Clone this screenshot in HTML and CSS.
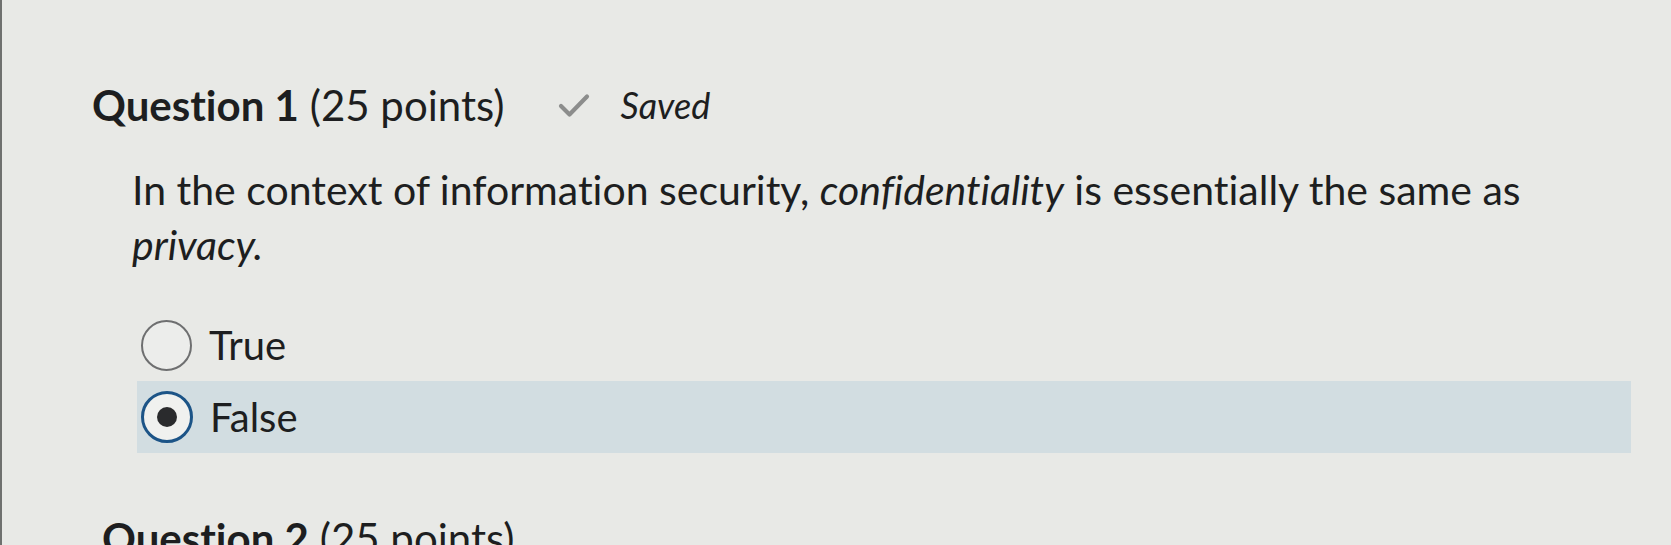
FILE: index.html
```html
<!DOCTYPE html>
<html>
<head>
<meta charset="utf-8">
<link rel="stylesheet" href="styles.css">
</head>
<body>
<div class="page">
  <section class="question">
    <header class="q-header">
      <h2 class="q-title"><span class="q-num">Question 1</span> (25 points)</h2>
      <span class="saved">
        <svg class="check" viewBox="0 0 32 25" width="32" height="25"><path d="M3 13 L11.5 21.5 L29 3.5" fill="none" stroke="#8c8d8c" stroke-width="4.2" stroke-linecap="round" stroke-linejoin="round"/></svg>
        <span class="saved-text">Saved</span>
      </span>
    </header>
    <p class="q-text">In the context of information security, <em>confidentiality</em> is essentially the same as <em>privacy.</em></p>
    <div class="options">
      <label class="option">
        <span class="radio"></span>
        <span class="opt-label">True</span>
      </label>
      <label class="option selected">
        <span class="radio"><span class="dot"></span></span>
        <span class="opt-label">False</span>
      </label>
    </div>
  </section>
  <section class="question next">
    <h2 class="q-title"><span class="q-num">Question 2</span> (25 points)</h2>
  </section>
</div>
</body>
</html>
```
FILE: styles.css
```css
html, body {
  margin: 0;
  padding: 0;
}
body {
  background: #e8e9e6;
  font-family: Lato, "Open Sans", sans-serif;
  font-variant-ligatures: none;
  color: #1d1e20;
  height: 545px;
  overflow: hidden;
  border-left: 2px solid #6f716f;
  box-sizing: border-box;
}
.page {
  padding: 80px 0 0 90px;
}
.q-header {
  display: flex;
  align-items: baseline;
}
.q-title {
  margin: 0;
  font-size: 42px;
  line-height: 50px;
  font-weight: 400;
}
.q-num {
  font-weight: 700;
}
.saved {
  display: inline-flex;
  align-items: center;
  margin-left: 54px;
  align-self: center;
}
.check {
  display: block;
  margin-right: 30px;
}
.saved-text {
  font-style: italic;
  font-size: 36px;
  line-height: 48px;
}
.q-text {
  margin: 32px 0 0 40px;
  font-size: 41px;
  line-height: 55px;
  width: 1440px;
}
.q-text em {
  font-style: italic;
}
.options {
  margin: 37px 0 0 45px;
  width: 1494px;
  display: flex;
  flex-direction: column;
}
.option {
  display: flex;
  align-items: center;
  height: 72px;
  padding-left: 4px;
}
.option.selected {
  background: #d2dde1;
}
.radio {
  width: 47px;
  height: 47px;
  border: 2px solid #6e6f70;
  border-radius: 50%;
  background: #ecedeb;
  display: flex;
  align-items: center;
  justify-content: center;
  flex: none;
}
.selected .radio {
  border: 3px solid #1c5487;
  width: 46px;
  height: 46px;
  background: #f0f1ef;
}
.dot {
  width: 20px;
  height: 20px;
  border-radius: 50%;
  background: #2a2b2d;
}
.opt-label {
  margin-left: 17px;
  font-size: 40px;
}
.next {
  margin-top: 60px;
  margin-left: 10px;
}
```
